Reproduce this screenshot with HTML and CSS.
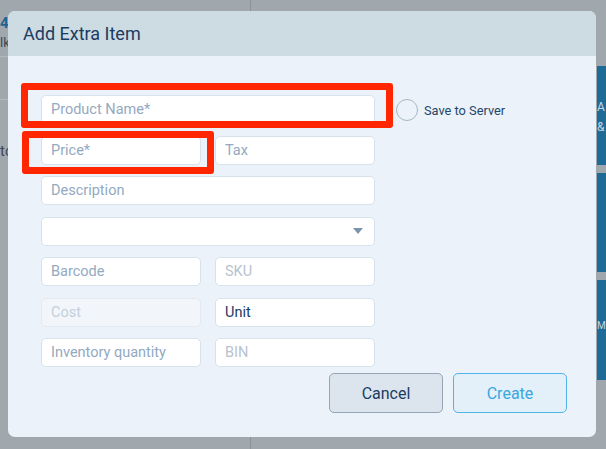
FILE: index.html
```html
<!DOCTYPE html>
<html lang="en">
<head>
<meta charset="utf-8">
<title>Add Extra Item</title>
<link rel="stylesheet" href="styles.css">
</head>
<body>
  <div class="app">
    <aside class="left-pane">
      <div class="acct">
        <div class="acct-num">4</div>
        <div class="acct-sub">lk</div>
      </div>
      <div class="left-row"></div>
      <div class="left-row tall"><span>tc</span></div>
    </aside>
    <main class="center-pane"></main>
    <aside class="right-pane">
      <div class="tile">A<br>&amp;</div>
      <div class="tile"></div>
      <div class="tile tile-last">M</div>
    </aside>
  </div>

  <div class="modal">
    <div class="modal-header">Add Extra Item</div>
    <div class="modal-body">
      <div class="first-row">
        <input class="field wide" placeholder="Product Name*">
        <label class="radio-label"><span class="radio"></span>Save to Server</label>
      </div>
      <div class="grid">
        <input class="field" placeholder="Price*">
        <input class="field" placeholder="Tax">
        <input class="field span2" placeholder="Description">
        <div class="field select span2"><span class="caret"></span></div>
        <input class="field" placeholder="Barcode">
        <input class="field light" placeholder="SKU">
        <input class="field disabled" placeholder="Cost" disabled>
        <input class="field filled" value="Unit">
        <input class="field" placeholder="Inventory quantity">
        <input class="field light" placeholder="BIN">
      </div>
      <div class="actions">
        <button class="btn btn-cancel">Cancel</button>
        <button class="btn btn-create">Create</button>
      </div>
    </div>
  </div>

  <div class="mark mark-name"></div>
  <div class="mark mark-price"></div>
</body>
</html>
```

FILE: styles.css
```css
* { box-sizing: border-box; }

html, body {
  margin: 0;
  width: 606px;
  height: 449px;
  overflow: hidden;
}

body {
  position: relative;
  background: #a0a7ad;
  font-family: Roboto, "Liberation Sans", sans-serif;
}

.app {
  display: flex;
  height: 449px;
}

.left-pane {
  width: 251px;
  border-right: 1px solid #8b9298;
  display: flex;
  flex-direction: column;
}

.acct {
  height: 57px;
  padding-top: 15px;
  border-bottom: 1px solid #b2b8bd;
}

.acct-num {
  color: #1f6592;
  font-weight: bold;
  font-size: 15px;
  line-height: 16px;
}

.acct-sub {
  color: #3f4a54;
  font-size: 13px;
  line-height: 18px;
  margin-top: 3px;
}

.left-row {
  height: 43px;
  border-bottom: 1px solid #b2b8bd;
}

.left-row.tall {
  height: 90px;
  padding-top: 42px;
  border-bottom: none;
  color: #3f4a54;
  font-size: 15px;
}

.center-pane { flex: 1; }

.right-pane {
  width: 9px;
  padding-top: 66px;
  display: flex;
  flex-direction: column;
  gap: 8px;
  background: #a0a7ad;
}

.tile {
  height: 99px;
  width: 9px;
  overflow: hidden;
  background: #1e6b98;
  color: #c9d7e0;
  font-size: 12px;
  line-height: 20px;
  padding-top: 31px;
  white-space: nowrap;
}

.tile-last {
  height: 100px;
  padding-top: 36px;
  font-size: 10px;
}

.modal {
  position: absolute;
  left: 8px;
  top: 11px;
  width: 588px;
  height: 426px;
  border-radius: 7px;
  overflow: hidden;
  background: #ebf2f9;
}

.modal-header {
  height: 45px;
  background: #cddbe3;
  color: #1b3b62;
  font-size: 18px;
  line-height: 46px;
  padding-left: 15px;
}

.modal-body {
  padding: 39px 29px 0 33px;
}

.first-row {
  display: flex;
  align-items: center;
}

.field {
  height: 29px;
  border: 1px solid #d7e2ec;
  border-radius: 5px;
  background: #ffffff;
  padding: 0 9px;
  font-family: Roboto, "Liberation Sans", sans-serif;
  font-size: 14.5px;
  color: #1b3b62;
  outline: none;
  margin: 0;
  width: 100%;
}

.field::placeholder { color: #93a9bf; }
.field.light::placeholder { color: #b8c3ce; }
.field.disabled { background: #f2f6fa; border-color: #e2e9f0; }
.field.disabled::placeholder { color: #c4cfda; }

.field.wide { width: 334px; flex: none; }

.radio-label {
  display: flex;
  align-items: center;
  margin-left: 21px;
  font-size: 12.8px;
  color: #264669;
  gap: 6px;
  margin-top: 1px;
}

.radio {
  width: 22px;
  height: 22px;
  border-radius: 50%;
  border: 1.5px solid #a7b6c4;
  background: transparent;
}

.grid {
  display: grid;
  grid-template-columns: 160px 160px;
  column-gap: 14px;
  row-gap: 11.5px;
  width: 334px;
  margin-top: 11.5px;
}

.span2 { grid-column: 1 / 3; }

.select {
  display: flex;
  align-items: center;
  justify-content: flex-end;
  padding-right: 11px;
}

.caret {
  width: 0;
  height: 0;
  border-left: 5.5px solid transparent;
  border-right: 5.5px solid transparent;
  border-top: 6px solid #7d95aa;
}

.actions {
  display: flex;
  justify-content: flex-end;
  gap: 10px;
  margin-top: 6px;
}

.btn {
  width: 114px;
  height: 40px;
  border-radius: 5px;
  font-family: Roboto, "Liberation Sans", sans-serif;
  font-size: 16px;
  padding: 0;
}

.btn-cancel {
  background: #dce5ee;
  border: 1px solid #93a5b6;
  color: #1b3b62;
}

.btn-create {
  background: #e3eff9;
  border: 1.5px solid #4fb4e8;
  color: #3aa6de;
}

.mark {
  position: absolute;
  border: 7px solid #ff2600;
  border-radius: 3px;
}

.mark-name {
  left: 21px;
  top: 83px;
  width: 372px;
  height: 45px;
}

.mark-price {
  left: 22px;
  top: 131px;
  width: 192px;
  height: 43px;
}
```
